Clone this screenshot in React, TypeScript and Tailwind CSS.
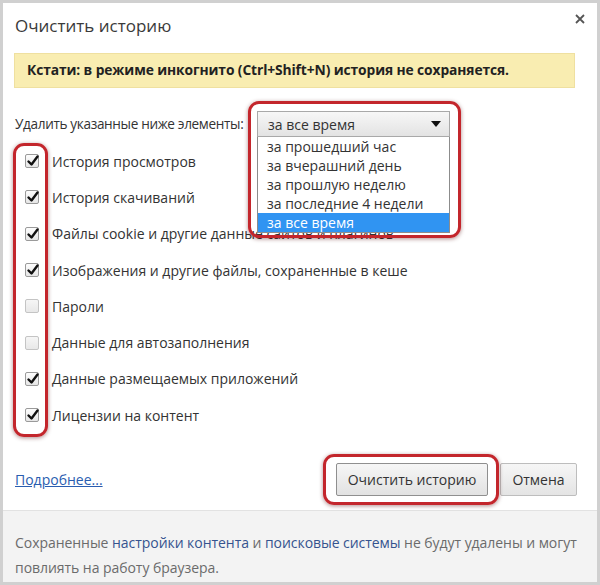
import React from "react";

const items: { label: string; checked: boolean }[] = [
  { label: "История просмотров", checked: true },
  { label: "История скачиваний", checked: true },
  { label: "Файлы cookie и другие данные сайтов и плагинов", checked: true },
  { label: "Изображения и другие файлы, сохраненные в кеше", checked: true },
  { label: "Пароли", checked: false },
  { label: "Данные для автозаполнения", checked: false },
  { label: "Данные размещаемых приложений", checked: true },
  { label: "Лицензии на контент", checked: true },
];

const options = [
  "за прошедший час",
  "за вчерашний день",
  "за прошлую неделю",
  "за последние 4 недели",
  "за все время",
];

function Checkbox({ checked }: { checked: boolean }) {
  return (
    <div
      className={
        checked
          ? "relative w-[14px] h-[14px] border border-[#9a9a9a] rounded-[2px] bg-gradient-to-b from-[#fdfdfd] to-[#e6e6e6]"
          : "relative w-[14px] h-[14px] border border-[#c4c4c4] rounded-[2px] bg-gradient-to-b from-[#f6f6f6] to-[#e8e8e8]"
      }
    >
      {checked && (
        <svg viewBox="0 0 14 14" className="absolute left-[0px] top-[-1px] w-[14px] h-[14px]">
          <path d="M2.5 7.5 L5.5 10.5 L11.5 2.5" fill="none" stroke="#111" strokeWidth="2.4" strokeLinecap="round" strokeLinejoin="round" />
        </svg>
      )}
    </div>
  );
}

export default function App() {
  return (
    <div
      className="w-[600px] h-[585px] bg-[#d0d0d0] p-[3px]"
      style={{ fontFamily: '"Open Sans", "Noto Sans", sans-serif' }}
    >
      <div className="relative w-full h-full bg-white flex flex-col">
        {/* header */}
        <div className="relative pl-[12px] pt-[10px]">
          <div className="text-[17px] leading-[26px] text-[#3a3a3a]">Очистить историю</div>
          <svg viewBox="0 0 10 10" className="absolute right-[12px] top-[11px] w-[10px] h-[10px]">
            <path d="M1 1 L9 9 M9 1 L1 9" stroke="#555" strokeWidth="1.8" />
          </svg>
        </div>

        {/* banner */}
        <div className="ml-[11px] mr-[22px] mt-[14px] h-[35px] bg-[#f9edb1] border border-[#efe0a0] flex items-center pl-[12px]">
          <span className="text-[13.8px] font-bold text-[#222] tracking-[-0.1px] whitespace-nowrap">
            Кстати: в режиме инкогнито (Ctrl+Shift+N) история не сохраняется.
          </span>
        </div>

        {/* delete row */}
        <div className="flex items-center h-[26px] pl-[12px] mt-[23px] relative z-10">
          <span className="text-[13.6px] text-[#333] w-[242px] whitespace-nowrap tracking-[-0.35px]">Удалить указанные ниже элементы:</span>
          <div className="relative w-[193px]">
            <div className="h-[26px] border border-[#a9a9a9] bg-gradient-to-b from-[#f7f7f7] to-[#e3e3e3] flex items-center pl-[10px] pr-[8px] justify-between">
              <span className="text-[14px] text-[#333]">за все время</span>
              <svg viewBox="0 0 10 6" className="w-[10px] h-[6px]">
                <path d="M0 0 L10 0 L5 6 Z" fill="#111" />
              </svg>
            </div>
            <div className="absolute left-0 top-[26px] w-[193px] bg-white border border-[#8c8c8c] border-t-0">
              {options.map((o, i) => (
                <div
                  key={o}
                  className={
                    i === options.length - 1
                      ? "h-[19px] leading-[19px] pl-[9px] text-[14px] text-white bg-[#3094f2]"
                      : "h-[19px] leading-[19px] pl-[9px] text-[14px] text-[#333]"
                  }
                >
                  {o}
                </div>
              ))}
            </div>
            <div className="absolute left-[-9px] top-[-10px] w-[213px] h-[137px] border-[3px] border-[#c3262c] rounded-[11px] shadow-[0_1px_4px_rgba(80,0,0,0.45)] pointer-events-none" />
          </div>
        </div>

        {/* checkbox list */}
        <div className="relative mt-[6px] pl-[22px]">
          {items.map((it) => (
            <div key={it.label} className="h-[36.3px] flex items-center">
              <Checkbox checked={it.checked} />
              <span className="ml-[13px] text-[14px] text-[#333] whitespace-nowrap">{it.label}</span>
            </div>
          ))}
          <div className="absolute left-[10px] top-0 w-[35px] h-[294px] border-[3px] border-[#c3262c] rounded-[11px] shadow-[0_1px_4px_rgba(80,0,0,0.45)] pointer-events-none" />
        </div>

        {/* buttons row */}
        <div className="flex items-center pl-[12px] pr-[20px] mt-[30px]">
          <span className="text-[14px] text-[#2a5db0] underline">Подробнее...</span>
          <div className="ml-auto flex items-center gap-[12px]">
            <div className="relative">
              <div className="w-[152px] h-[33px] border border-[#8f8f8f] bg-gradient-to-b from-[#f6f6f6] to-[#e2e2e2] rounded-[2px] flex items-center justify-center text-[14px] text-[#333]">
                Очистить историю
              </div>
              <div className="absolute left-[-13px] top-[-9px] w-[176px] h-[51px] border-[3px] border-[#c3262c] rounded-[11px] shadow-[0_1px_4px_rgba(80,0,0,0.45)] pointer-events-none" />
            </div>
            <div className="w-[77px] h-[33px] border border-[#bdbdbd] bg-gradient-to-b from-[#f6f6f6] to-[#e4e4e4] rounded-[2px] flex items-center justify-center text-[14px] text-[#333]">
              Отмена
            </div>
          </div>
        </div>

        {/* footer */}
        <div className="mt-auto h-[72px] bg-[#f3f3f3] border-t border-[#e2e2e2] pl-[12px] pt-[19px]">
          <p className="text-[14px] leading-[25px] text-[#6b6b6b] tracking-[-0.05px]">
            Сохраненные <span className="text-[#35538f]">настройки контента</span> и{" "}
            <span className="text-[#35538f]">поисковые системы</span> не будут удалены и могут
            <br />
            повлиять на работу браузера.
          </p>
        </div>
      </div>
    </div>
  );
}
